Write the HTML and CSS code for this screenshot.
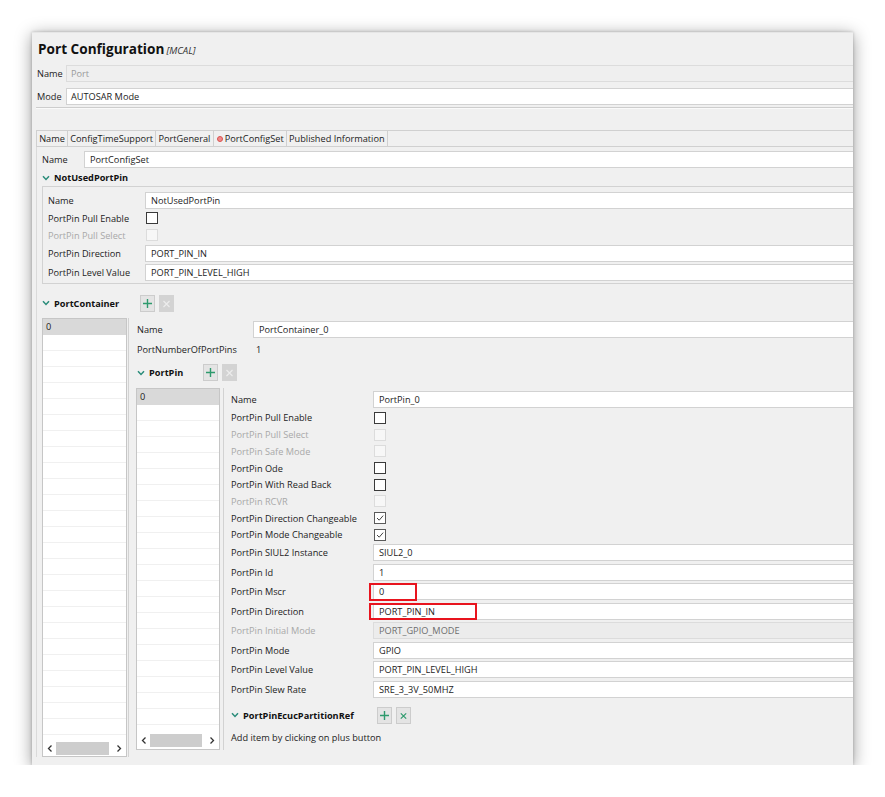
FILE: index.html
```html
<!DOCTYPE html>
<html>
<head>
<meta charset="utf-8">
<title>Port Configuration</title>
<link rel="stylesheet" href="styles.css">
</head>
<body>
<div class="window">
  <div class="inner">
    <div class="title"><span class="title-main">Port Configuration</span><span class="title-tag">[MCAL]</span></div>
    <div class="toprow first"><span class="tlabel">Name</span><div class="field disabled muted">Port</div></div>
    <div class="toprow"><span class="tlabel">Mode</span><div class="field">AUTOSAR Mode</div></div>
    <div class="sep"></div>
    <div class="tabs">
      <div class="tab">Name</div>
      <div class="tab">ConfigTimeSupport</div>
      <div class="tab">PortGeneral</div>
      <div class="tab"><span class="dot"></span>PortConfigSet</div>
      <div class="tab">Published Information</div>
      <div class="tab-rest"></div>
    </div>
    <div class="tabbody">
      <div class="frow"><span class="lbl lw-cfg">Name</span><div class="field">PortConfigSet</div></div>
      <div class="shead sh-unused">
        <svg class="chev" width="8" height="6" viewBox="0 0 8 6"><path d="M1 1.2 L4 4.4 L7 1.2" fill="none" stroke="#2a8c7a" stroke-width="1.5"/></svg>
        <span class="stitle">NotUsedPortPin</span>
      </div>
      <div class="box">
        <div class="frow"><span class="lbl lw-box">Name</span><div class="field">NotUsedPortPin</div></div>
        <div class="crow"><span class="lbl lw-box">PortPin Pull Enable</span><span class="cb"></span></div>
        <div class="crow"><span class="lbl lw-box dis">PortPin Pull Select</span><span class="cb cb-dis"></span></div>
        <div class="frow"><span class="lbl lw-box">PortPin Direction</span><div class="field">PORT_PIN_IN</div></div>
        <div class="frow"><span class="lbl lw-box">PortPin Level Value</span><div class="field">PORT_PIN_LEVEL_HIGH</div></div>
      </div>

      <div class="shead sh-btns sh-container">
        <div class="shead-title t-container">
          <svg class="chev" width="8" height="6" viewBox="0 0 8 6"><path d="M1 1.2 L4 4.4 L7 1.2" fill="none" stroke="#2a8c7a" stroke-width="1.5"/></svg>
          <span class="stitle">PortContainer</span>
        </div>
        <span class="btn"><svg width="15" height="17" viewBox="0 0 15 17"><path d="M7.5 4 V13 M3 8.5 H12" stroke="#2e9a6d" stroke-width="1.4"/></svg></span>
        <span class="btn btn-dis"><svg width="15" height="17" viewBox="0 0 15 17"><path d="M4.5 6 L10.5 12 M10.5 6 L4.5 12" stroke="#ececec" stroke-width="1.2"/></svg></span>
      </div>

      <div class="split split1">
        <div class="list list1">
          <div class="list-body"><div class="item sel">0</div></div>
          <div class="hscroll">
            <svg class="arr" width="8" height="9" viewBox="0 0 8 9"><path d="M5.5 1.5 L2.5 4.5 L5.5 7.5" fill="none" stroke="#333" stroke-width="1.3"/></svg>
            <span class="thumb"></span>
            <svg class="arr" width="8" height="9" viewBox="0 0 8 9"><path d="M2.5 1.5 L5.5 4.5 L2.5 7.5" fill="none" stroke="#333" stroke-width="1.3"/></svg>
          </div>
        </div>
        <div class="vsep vsep1"></div>
        <div class="detail detail1">
          <div class="frow"><span class="lbl lw-d1">Name</span><div class="field">PortContainer_0</div></div>
          <div class="frow"><span class="lbl lw-d1">PortNumberOfPortPins</span><span class="val">1</span></div>
          <div class="shead sh-btns sh-pin">
            <div class="shead-title t-pin">
              <svg class="chev" width="8" height="6" viewBox="0 0 8 6"><path d="M1 1.2 L4 4.4 L7 1.2" fill="none" stroke="#2a8c7a" stroke-width="1.5"/></svg>
              <span class="stitle">PortPin</span>
            </div>
            <span class="btn"><svg width="15" height="17" viewBox="0 0 15 17"><path d="M7.5 4 V13 M3 8.5 H12" stroke="#2e9a6d" stroke-width="1.4"/></svg></span>
            <span class="btn btn-dis"><svg width="15" height="17" viewBox="0 0 15 17"><path d="M4.5 6 L10.5 12 M10.5 6 L4.5 12" stroke="#ececec" stroke-width="1.2"/></svg></span>
          </div>

          <div class="split split2">
            <div class="list list2">
              <div class="list-body"><div class="item sel">0</div></div>
              <div class="hscroll">
                <svg class="arr" width="8" height="9" viewBox="0 0 8 9"><path d="M5.5 1.5 L2.5 4.5 L5.5 7.5" fill="none" stroke="#333" stroke-width="1.3"/></svg>
                <span class="thumb"></span>
                <svg class="arr" width="8" height="9" viewBox="0 0 8 9"><path d="M2.5 1.5 L5.5 4.5 L2.5 7.5" fill="none" stroke="#333" stroke-width="1.3"/></svg>
              </div>
            </div>
            <div class="vsep vsep2"></div>
            <div class="detail detail2">
              <div class="frow"><span class="lbl lw-d2">Name</span><div class="field">PortPin_0</div></div>
              <div class="crow"><span class="lbl lw-d2">PortPin Pull Enable</span><span class="cb"></span></div>
              <div class="crow"><span class="lbl lw-d2 dis">PortPin Pull Select</span><span class="cb cb-dis"></span></div>
              <div class="crow"><span class="lbl lw-d2 dis">PortPin Safe Mode</span><span class="cb cb-dis"></span></div>
              <div class="crow"><span class="lbl lw-d2">PortPin Ode</span><span class="cb"></span></div>
              <div class="crow"><span class="lbl lw-d2">PortPin With Read Back</span><span class="cb"></span></div>
              <div class="crow"><span class="lbl lw-d2 dis">PortPin RCVR</span><span class="cb cb-dis"></span></div>
              <div class="crow"><span class="lbl lw-d2">PortPin Direction Changeable</span><span class="cb cb-on"><svg width="10" height="10" viewBox="0 0 10 10"><path d="M2 5 L4.2 7.2 L8.2 2.6" fill="none" stroke="#444" stroke-width="1"/></svg></span></div>
              <div class="crow"><span class="lbl lw-d2">PortPin Mode Changeable</span><span class="cb cb-on"><svg width="10" height="10" viewBox="0 0 10 10"><path d="M2 5 L4.2 7.2 L8.2 2.6" fill="none" stroke="#444" stroke-width="1"/></svg></span></div>
              <div class="frow"><span class="lbl lw-d2">PortPin SIUL2 Instance</span><div class="field">SIUL2_0</div></div>
              <div class="frow"><span class="lbl lw-d2">PortPin Id</span><div class="field">1</div></div>
              <div class="frow"><span class="lbl lw-d2">PortPin Mscr</span><div class="field hl-host">0<span class="hl hl-mscr"></span></div></div>
              <div class="frow"><span class="lbl lw-d2">PortPin Direction</span><div class="field hl-host">PORT_PIN_IN<span class="hl hl-dir"></span></div></div>
              <div class="frow"><span class="lbl lw-d2 dis">PortPin Initial Mode</span><div class="field disabled">PORT_GPIO_MODE</div></div>
              <div class="frow"><span class="lbl lw-d2">PortPin Mode</span><div class="field">GPIO</div></div>
              <div class="frow"><span class="lbl lw-d2">PortPin Level Value</span><div class="field">PORT_PIN_LEVEL_HIGH</div></div>
              <div class="frow"><span class="lbl lw-d2">PortPin Slew Rate</span><div class="field">SRE_3_3V_50MHZ</div></div>
              <div class="shead sh-btns sh-ecuc">
                <div class="shead-title t-ecuc">
                  <svg class="chev" width="8" height="6" viewBox="0 0 8 6"><path d="M1 1.2 L4 4.4 L7 1.2" fill="none" stroke="#2a8c7a" stroke-width="1.5"/></svg>
                  <span class="stitle">PortPinEcucPartitionRef</span>
                </div>
                <span class="btn"><svg width="15" height="17" viewBox="0 0 15 17"><path d="M7.5 4 V13 M3 8.5 H12" stroke="#2e9a6d" stroke-width="1.4"/></svg></span>
                <span class="btn"><svg width="15" height="17" viewBox="0 0 15 17"><path d="M4.8 6.3 L10.2 11.7 M10.2 6.3 L4.8 11.7" stroke="#2e9a6d" stroke-width="1.2"/></svg></span>
              </div>
              <div class="hint">Add item by clicking on plus button</div>
            </div>
          </div>
        </div>
      </div>
    </div>
  </div>
</div>
</body>
</html>
```

FILE: styles.css
```css
html, body {
  margin: 0;
  padding: 0;
  background: #ffffff;
}

body {
  font-family: "Open Sans", "Noto Sans", "DejaVu Sans", sans-serif;
  font-size: 9.2px;
  color: #1c1c1c;
}

.window {
  margin: 32px 0 0 32px;
  width: 821px;
  height: 733px;
  background: #f0f0f0;
  box-shadow: 0 3px 16px rgba(0, 0, 0, 0.4), 0 0 3px rgba(0, 0, 0, 0.22);
  overflow: hidden;
  border-top: 1px solid #e6e6e6;
  box-sizing: border-box;
}

.inner {
  width: 832px;
}

/* title */
.title {
  padding: 5px 0 0 6px;
  height: 22px;
  line-height: 22px;
  white-space: nowrap;
}

.title-main {
  font-size: 13.6px;
  font-weight: 700;
  color: #111;
}

.title-tag {
  font-size: 9.6px;
  font-style: italic;
  color: #333;
  margin-left: 2px;
}

.toprow {
  display: flex;
  align-items: center;
  height: 17px;
  margin-top: 6px;
  padding-left: 5px;
}

.toprow.first {
  margin-top: 5px;
}

.tlabel {
  width: 29px;
  flex: none;
}

.field {
  flex: 1;
  height: 17px;
  box-sizing: border-box;
  border: 1px solid #d2d2d2;
  background: #ffffff;
  padding-left: 5px;
  line-height: 15px;
  white-space: nowrap;
  color: #1c1c1c;
}

.toprow .field {
  padding-left: 4px;
}

.field.disabled {
  background: #ececec;
  border-color: #dcdcdc;
  color: #6e6e6e;
}

.field.muted {
  color: #9a9a9a;
  background: #efefef;
}

.sep {
  margin: 2px 0 0 4px;
  height: 1px;
  background: #cdcdcd;
  border-bottom: 1px solid #fafafa;
}

/* tabs */
.tabs {
  display: flex;
  margin: 21px 0 0 4px;
  height: 17px;
  box-sizing: border-box;
  border-top: 1px solid #d0d0d0;
  border-bottom: 1px solid #d0d0d0;
}

.tab {
  padding: 0 2.2px 0 2.2px;
  line-height: 15px;
  border-left: 1px solid #d0d0d0;
  white-space: nowrap;
  display: flex;
  align-items: center;
}

.tab-rest {
  flex: 1;
  border-left: 1px solid #d0d0d0;
}

.dot {
  width: 4px;
  height: 4px;
  border-radius: 50%;
  background: #f08a8a;
  border: 0.5px solid #d9534f;
  margin: 0 2px 0 1px;
}

.tabbody {
  margin-left: 4px;
  padding: 3px 0 0 5px;
  border-left: 1px solid #dadada;
}

/* rows */
.frow {
  display: flex;
  align-items: center;
  height: 19.5px;
}

.crow {
  display: flex;
  align-items: center;
  height: 16.7px;
}

.lbl {
  flex: none;
  white-space: nowrap;
  color: #1c1c1c;
}

.lbl.dis {
  color: #a8a8a8;
}

.lw-cfg { width: 42px; }
.lw-box { width: 97px; }
.lw-d1 { width: 116px; }
.lw-d2 { width: 142px; }

.val {
  padding-left: 3px;
}

.box {
  border: 1px solid #d2d2d2;
  padding: 3.5px 0 1px 5px;
}

.cb {
  width: 12px;
  height: 12px;
  box-sizing: border-box;
  border: 1px solid #3a3a3a;
  background: #ffffff;
  display: flex;
  align-items: center;
  justify-content: center;
  margin-left: 1px;
}

.cb-on {
  border-color: #5a5a5a;
}

.cb-dis {
  border-color: #dcdcdc;
  background: #f7f7f7;
}

/* section heads */
.shead {
  display: flex;
  align-items: center;
  height: 16.5px;
}

.chev {
  flex: none;
  margin-right: 4px;
}

.stitle {
  font-weight: 700;
  color: #111;
}

.sh-unused {
  padding-left: 0;
}

.sh-btns {
  height: 18px;
}

.shead-title {
  display: flex;
  align-items: center;
  flex: none;
}

.sh-container {
  margin: 10px 0 6px 0;
}
.t-container { width: 98px; }

.sh-pin {
  margin: 5px 0 6px 0;
}
.t-pin { width: 66px; }

.sh-ecuc {
  margin: 7px 0 0 0;
}
.t-ecuc { width: 146px; }

.btn {
  width: 15px;
  height: 17px;
  box-sizing: border-box;
  border: 1px solid #cccccc;
  background: #e4e4e4;
  margin-right: 4px;
  display: flex;
  align-items: center;
  justify-content: center;
}

.btn svg {
  display: block;
  margin: -1px;
}

.btn-dis {
  background: #d3d3d3;
  border-color: #d3d3d3;
}

/* split panes */
.split {
  display: flex;
  align-items: stretch;
}

.list {
  flex: none;
  box-sizing: border-box;
  border: 1px solid #c6c6c6;
  background: #ffffff;
  display: flex;
  flex-direction: column;
}

.list1 {
  width: 85px;
  height: 439px;
}

.list2 {
  width: 84px;
  height: 362px;
  margin-left: -1px;
}

.list-body {
  flex: 1;
  background-image: repeating-linear-gradient(to bottom, transparent 0, transparent 15px, #f0f0f0 15px, #f0f0f0 16px);
}

.item {
  height: 16px;
  line-height: 15px;
  padding-left: 3px;
  box-sizing: border-box;
}

.item.sel {
  background: #d9d9d9;
}

.hscroll {
  height: 14px;
  display: flex;
  align-items: center;
  margin-bottom: 1px;
  padding: 0 3px;
}

.arr {
  flex: none;
  display: block;
}

.thumb {
  flex: 1;
  height: 13px;
  background: #cdcdcd;
  margin: 0 6px 0 2px;
}

.vsep {
  flex: none;
  width: 1px;
  background: #d2d2d2;
}

.vsep1 {
  margin-left: 1px;
}

.vsep2 {
  margin-left: 3px;
  height: 362px;
}

.detail {
  flex: 1;
  min-width: 0;
}

.detail1 {
  padding: 1.5px 0 0 8px;
}

.detail2 {
  padding: 2.25px 0 0 7px;
}

.hl-host {
  position: relative;
}

.hl {
  position: absolute;
  top: -1px;
  left: -5px;
  box-sizing: border-box;
  border: 2px solid #e8141e;
}

.hl-mscr {
  width: 48px;
  height: 18px;
}

.hl-dir {
  width: 108px;
  height: 17px;
}

.hint {
  margin-top: 6px;
  height: 16px;
  line-height: 16px;
  white-space: nowrap;
}
```
